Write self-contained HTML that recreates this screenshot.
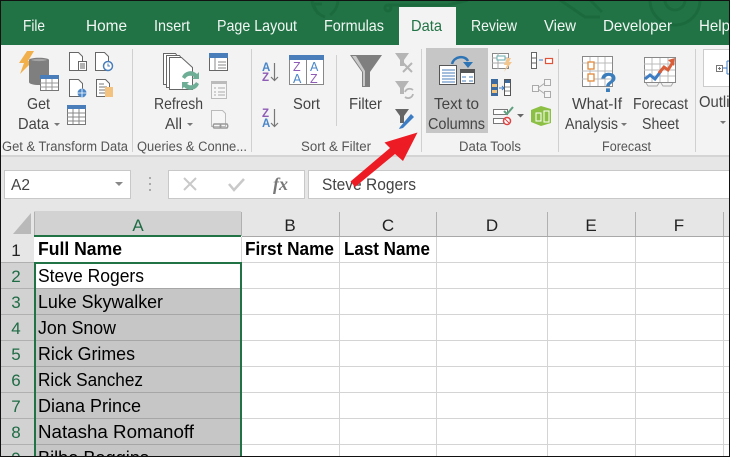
<!DOCTYPE html>
<html><head><meta charset="utf-8"><style>
html,body{margin:0;padding:0;background:#fff}
svg{display:block}
text{font-family:"Liberation Sans",sans-serif;font-size:16px;fill:#444}
.t{fill:#f2f7f4;font-size:16px}
.g{font-size:13.500px;fill:#555}
.c{font-size:18.500px;fill:#000}
.b{font-size:18px;font-weight:bold;fill:#000}
.h{font-size:17px;fill:#222}
.n{font-size:17px;fill:#1f6b45}
</style></head><body>
<svg width="730" height="457" viewBox="0 0 730 457" xmlns="http://www.w3.org/2000/svg" shape-rendering="geometricPrecision">
<rect width="730" height="457" fill="#fff"/>
<!-- title / tabs -->
<rect width="730" height="45" fill="#217346"/>
<g fill="none" stroke="#1b6a3e" stroke-width="3">
<path d="M312 0a19 19 0 0 0 13 17M338 0a19 19 0 0 1-8 15M318 14l-5-10h9M388 5h60M388 5a3 3 0 1 1-.1 0M448 5l20-5"/>
<path d="M560 0l25 17h15M590 0l12 12M700 0a25 25 0 0 1-50 0M665 0a10 10 0 0 0 20 0"/>
</g>
<rect x="399" y="7" width="57" height="38" fill="#f3f3f3"/>
<text class="t" x="23" y="31" textLength="22" lengthAdjust="spacingAndGlyphs">File</text>
<text class="t" x="86" y="31" textLength="41" lengthAdjust="spacingAndGlyphs">Home</text>
<text class="t" x="154" y="31" textLength="36" lengthAdjust="spacingAndGlyphs">Insert</text>
<text class="t" x="217" y="31" textLength="80" lengthAdjust="spacingAndGlyphs">Page Layout</text>
<text class="t" x="324" y="31" textLength="60" lengthAdjust="spacingAndGlyphs">Formulas</text>
<text class="t" x="411" y="31" textLength="31" lengthAdjust="spacingAndGlyphs" style="fill:#217346">Data</text>
<text class="t" x="471" y="31" textLength="46" lengthAdjust="spacingAndGlyphs">Review</text>
<text class="t" x="544" y="31" textLength="32" lengthAdjust="spacingAndGlyphs">View</text>
<text class="t" x="603" y="31" textLength="69" lengthAdjust="spacingAndGlyphs">Developer</text>
<text class="t" x="699" y="31" textLength="31" lengthAdjust="spacingAndGlyphs">Help</text>
<!-- ribbon -->
<rect y="45" width="730" height="110" fill="#f3f3f3"/>
<rect y="155" width="730" height="2" fill="#d4d4d4"/>
<g fill="#d0d0d0">
<rect x="132" y="49" width="1" height="103"/><rect x="251" y="49" width="1" height="103"/>
<rect x="421" y="49" width="1" height="103"/><rect x="558" y="49" width="1" height="103"/>
<rect x="695" y="49" width="1" height="103"/><rect x="336" y="55" width="1" height="71"/>
</g>
<rect x="426" y="48" width="62" height="85" fill="#c6c6c6"/>
<!-- ribbon labels -->
<text x="27" y="109" textLength="23" lengthAdjust="spacingAndGlyphs">Get</text>
<text x="18" y="129" textLength="31" lengthAdjust="spacingAndGlyphs">Data</text>
<text x="154" y="109" textLength="49" lengthAdjust="spacingAndGlyphs">Refresh</text>
<text x="165" y="129" textLength="17" lengthAdjust="spacingAndGlyphs">All</text>
<text x="293" y="109" textLength="27" lengthAdjust="spacingAndGlyphs">Sort</text>
<text x="349" y="109" textLength="33" lengthAdjust="spacingAndGlyphs">Filter</text>
<text x="434" y="109" textLength="45" lengthAdjust="spacingAndGlyphs">Text to</text>
<text x="428" y="129" textLength="57" lengthAdjust="spacingAndGlyphs">Columns</text>
<text x="572" y="109" textLength="50" lengthAdjust="spacingAndGlyphs">What-If</text>
<text x="565" y="129" textLength="53" lengthAdjust="spacingAndGlyphs">Analysis</text>
<text x="633" y="109" textLength="55" lengthAdjust="spacingAndGlyphs">Forecast</text>
<text x="642" y="129" textLength="37" lengthAdjust="spacingAndGlyphs">Sheet</text>
<text x="699" y="107" textLength="47" lengthAdjust="spacingAndGlyphs">Outline</text>
<text class="g" x="2" y="151" textLength="126" lengthAdjust="spacingAndGlyphs">Get &amp; Transform Data</text>
<text class="g" x="137" y="151" textLength="110" lengthAdjust="spacingAndGlyphs">Queries &amp; Conne...</text>
<text class="g" x="301" y="151" textLength="70" lengthAdjust="spacingAndGlyphs">Sort &amp; Filter</text>
<text class="g" x="459" y="151" textLength="62" lengthAdjust="spacingAndGlyphs">Data Tools</text>
<text class="g" x="602" y="151" textLength="49" lengthAdjust="spacingAndGlyphs">Forecast</text>
<g fill="#777"><path d="M54 123h6l-3 3zM187 123h6l-3 3zM621 123h6l-3 3zM720 121h6l-3 3z"/><path d="M517 114h7l-3.500 3.500z" fill="#666"/></g>

<!-- Get Data icon -->
<path d="M27 51h7l-6 10h5L20 74l4-11h-5z" fill="#f2b04c"/>
<path d="M29 60c0-3 20-3 20 0v22c0 4-20 4-20 0z" fill="#7f7f7f"/>
<path d="M31 60c3-1.500 13-1.500 16 0c-3 1.500-13 1.500-16 0z" fill="#a5a5a5"/>
<rect x="40.500" y="75.500" width="18" height="15" fill="#fff" stroke="#777"/>
<rect x="40" y="75" width="19" height="4" fill="#4a7ebb"/>
<path d="M40 83h18M40 87h18M46 79v11M52 79v11" stroke="#999" fill="none"/>
<!-- small docs -->
<g fill="#fff" stroke="#666" stroke-width="1">
<path d="M69.500 52.500h9l4 4v14h-13zM95.500 52.500h9l4 4v14h-13zM69.500 79.500h9l4 4v13h-13zM96.500 79.500h9l4 4v13h-13z"/>
</g>
<rect x="78.500" y="61.500" width="8" height="9" fill="#fff" stroke="#666"/><path d="M80 64h5M80 66h5M80 68h5" stroke="#666"/>
<circle cx="108" cy="66" r="4.500" fill="#fff" stroke="#4a7ebb" stroke-width="1.500"/><path d="M108 63.500V66h2" stroke="#4a7ebb" fill="none"/>
<circle cx="82" cy="93" r="4.500" fill="#4a86c8"/><path d="M77.500 93h9M82 88.500v9" stroke="#fff" stroke-width=".8"/>
<path d="M99 84h5M99 87h8M99 90h6M99 93h6" stroke="#777"/>
<rect x="105" y="87" width="8" height="10" fill="#f4c27f"/>
<rect x="67.500" y="105.500" width="18" height="19" fill="#fff" stroke="#777"/><rect x="67" y="105" width="19" height="4" fill="#4a7ebb"/>
<path d="M67 113h18M67 117h18M67 121h18M73 109v15M79 109v15" stroke="#888" fill="none"/>
<!-- Refresh icon -->
<g fill="#fff" stroke="#666"><path d="M163.500 53.500h12l3 4v27h-15z"/><path d="M166.500 55.500h13l3 4v28h-16z"/><path d="M169.500 57.500h12l11 10v22h-23z"/></g>
<path d="M182 77a9 9 0 0 1 15-3l2-2v7h-7l2-2a6 6 0 0 0-9 2zM199 84a9 9 0 0 1-15 3l-2 2v-7h7l-2 2a6 6 0 0 0 9-2z" fill="#6fae96"/>
<rect x="209.500" y="53.500" width="18" height="17" fill="#fff" stroke="#666"/><rect x="209" y="53" width="19" height="5" fill="#4a7ebb"/>
<path d="M215 58v12M218 62h8M218 65h8M218 68h8" stroke="#888" fill="none"/>
<rect x="211.500" y="81.500" width="15" height="17" fill="#f6f6f6" stroke="#bbb"/><rect x="211" y="81" width="16" height="3" fill="#bbb"/><path d="M214 88h2M218 88h7M214 92h2M218 92h7M214 95h2M218 95h7" stroke="#aaa"/>
<path d="M211.500 110.500h11l3 3v13h-14z" fill="#f6f6f6" stroke="#bbb"/><path d="M214 124h6a3 3 0 0 1 0 4h-6a3 3 0 0 1 0-4zM221 124h6a3 3 0 0 1 0 4h-6a3 3 0 0 1 0-4z" fill="none" stroke="#999" stroke-width="1.500"/>
<!-- sort icons -->
<rect x="289.500" y="55.500" width="34" height="29" fill="#fff" stroke="#888"/><rect x="289" y="55" width="35" height="5" fill="#4a7ebb"/><path d="M306.500 60v25" stroke="#888"/>
<text x="262" y="71" style="font-size:11.500px;font-weight:bold;fill:#4a86c8">A</text><text x="262" y="81" style="font-size:11.500px;font-weight:bold;fill:#8e5bb5">Z</text>
<text x="262" y="117" style="font-size:11.500px;font-weight:bold;fill:#8e5bb5">Z</text><text x="262" y="127" style="font-size:11.500px;font-weight:bold;fill:#4a86c8">A</text>
<text x="293" y="71" style="font-size:12.500px;fill:#8e5bb5">Z</text><text x="293" y="83" style="font-size:12.500px;fill:#4a86c8">A</text>
<text x="310" y="71" style="font-size:12.500px;fill:#4a86c8">A</text><text x="310" y="83" style="font-size:12.500px;fill:#8e5bb5">Z</text>
<path d="M274.500 63v17M271 77l3.500 3.500L278 77M274.500 109v17M271 123l3.500 3.500L278 123" fill="none" stroke="#777" stroke-width="1.200"/>
<!-- filter -->
<path d="M350 55h32l-12 17v15h-8V72z" fill="#7f7f7f"/><path d="M356 57h20l-9 15v14h-2V72z" fill="#7f7f7f"/><path d="M352 56l11 16v14h2V71L356 56z" fill="#c9c9c9"/>
<path d="M395 53h14l-5 7v6h-4v-6z" fill="#b5b5b5"/><path d="M403 63l9 9M412 63l-9 9" stroke="#b5b5b5" stroke-width="2"/>
<path d="M395 81h14l-5 7v6h-4v-6z" fill="#b5b5b5"/><path d="M405 92a5 5 0 0 1 8-2M413 94a5 5 0 0 1-8 3" fill="none" stroke="#b5b5b5" stroke-width="1.800"/>
<path d="M395 109h14l-5 7v7h-4v-7z" fill="#666"/><path d="M400 127l11-13 3 3-11 11-4 1z" fill="#3b7cc4"/>
<!-- text to columns -->
<rect x="439.500" y="65.500" width="17" height="19" fill="#fff" stroke="#555"/><path d="M442 70h13M442 73h13M442 76h13M442 79h13M442 82h13" stroke="#4a7ebb"/>
<rect x="460.500" y="69.500" width="14" height="14" fill="#fff" stroke="#555"/><rect x="460" y="69" width="15" height="4" fill="#555"/><path d="M462 77h4M469 77h4M462 81h4M469 81h4" stroke="#4a7ebb"/>
<path d="M452 64c2-8 13-9 16-3" fill="none" stroke="#2e75b6" stroke-width="2.500"/><path d="M463 62h10l-5 6z" fill="#2e75b6"/>
<!-- data tools small -->
<rect x="492.500" y="53.500" width="16" height="15" fill="#fff" stroke="#888"/><path d="M492 58h16M492 63h16M498 53v16" stroke="#aaa"/><rect x="497" y="56" width="8" height="4" fill="#fff" stroke="#6aa"/><path d="M507 58l-3 7h3l-3 7 8-10h-3l2-4z" fill="#f2c68c"/>
<rect x="491.500" y="79.500" width="6" height="16" fill="#3c6a9e" stroke="#3c6a9e"/><rect x="492" y="84" width="5" height="3" fill="#f0c27a"/><rect x="492" y="90" width="5" height="3" fill="#f0c27a"/>
<rect x="504.500" y="79.500" width="6" height="16" fill="#fff" stroke="#555"/><rect x="505" y="80" width="5" height="3" fill="#3c6a9e"/><path d="M505 87h5M505 91h5" stroke="#888"/>
<path d="M499 88h5M502 86l2 2-2 2" stroke="#3b7cc4" fill="none"/>
<rect x="493.500" y="109.500" width="14" height="5" fill="#fff" stroke="#777"/><rect x="493.500" y="118.500" width="14" height="5" fill="#fff" stroke="#777"/>
<path d="M504 111l3 3 6-7" stroke="#5fa07f" stroke-width="2" fill="none"/><circle cx="507" cy="121" r="3.500" fill="#fff" stroke="#d44" stroke-width="1.500"/><path d="M505 119l4 4" stroke="#d44"/>
<rect x="531.500" y="52.500" width="5" height="16" fill="#fff" stroke="#666"/><path d="M531 58h5M531 63h5" stroke="#666"/><path d="M539 60h4" stroke="#3b7cc4"/><rect x="545.500" y="58.500" width="7" height="5" fill="#fff" stroke="#e0533a" stroke-width="1.200"/>
<g fill="#f6f6f6" stroke="#aaa"><rect x="532.500" y="85.500" width="6" height="6"/><rect x="544.500" y="79.500" width="6" height="6"/><rect x="544.500" y="91.500" width="6" height="6"/></g><path d="M538 88l7-5M538 89l7 5" stroke="#aaa"/>
<path d="M531 110l10-4 10 3v14l-10 3-10-4z" fill="#8cc044"/><path d="M536 113h5v8h-5zM544 111h5v11h-5z" fill="none" stroke="#fff"/>
<!-- what-if -->
<rect x="582.500" y="56.500" width="30" height="30" fill="#fff" stroke="#888"/>
<path d="M590 57v29M598 57v29M605 57v29M582 63h30M582 71h30M582 79h30" stroke="#bbb"/>
<rect x="588" y="62" width="6" height="7" fill="#fff" stroke="#e08a3c" stroke-width="1.300"/><rect x="588" y="74" width="6" height="7" fill="#fff" stroke="#e08a3c" stroke-width="1.300"/>
<text x="600" y="92" style="font-size:28px;font-weight:bold;fill:#3c7dbb">?</text>
<!-- forecast -->
<rect x="644.500" y="57.500" width="31" height="25" fill="#fff" stroke="#888"/>
<path d="M652 58v24M660 58v24M668 58v24M644 64h31M644 70h31M644 76h31" stroke="#bbb"/>
<path d="M645 79l5-4 5 4 6-8" fill="none" stroke="#3b7cc4" stroke-width="3"/>
<path d="M659 73l5-6 4 3 5-8" fill="none" stroke="#d95f3b" stroke-width="3"/><path d="M668 60l7-2-1 8z" fill="#d95f3b"/>
<path d="M646 83l2 3h9l2-3M661 83l2 3h8l2-3" fill="none" stroke="#aaa"/>
<!-- outline -->
<rect x="703.500" y="49.500" width="28" height="37" fill="#fff" stroke="#ccc"/>
<rect x="716.500" y="65.500" width="6" height="6" fill="#fff" stroke="#777"/><path d="M718 68.500h3M719.500 67v3" stroke="#777"/>
<path d="M723 68h4M727 61h3M727 74h3M727 61v13" stroke="#3b7cc4" fill="none"/>

<!-- formula bar -->
<rect y="157" width="730" height="55" fill="#e6e6e6"/>
<rect x="4.500" y="170.500" width="126" height="28" fill="#fff" stroke="#c8c8c8"/>
<text x="11" y="190" textLength="19" lengthAdjust="spacingAndGlyphs" style="font-size:16px">A2</text>
<path d="M115 182h8l-4 4z" fill="#888"/>
<path d="M149 177h2v2h-2zM149 183h2v2h-2zM149 189h2v2h-2z" fill="#aaa"/>
<rect x="168.500" y="170.500" width="136" height="28" fill="#fff" stroke="#c8c8c8"/>
<rect x="308.500" y="170.500" width="424" height="28" fill="#fff" stroke="#c8c8c8"/>
<path d="M184 178l12 12M196 178l-12 12" stroke="#c9c9c9" stroke-width="2"/>
<path d="M229 184l5 6 10-11" fill="none" stroke="#c9c9c9" stroke-width="2.500"/>
<text x="273" y="190" style="font-family:'Liberation Serif',serif;font-size:18px;font-style:italic;font-weight:bold;fill:#777">fx</text>
<text x="322" y="190" textLength="94" lengthAdjust="spacingAndGlyphs" style="font-size:16.500px">Steve Rogers</text>

<!-- headers -->
<rect x="1" y="211" width="729" height="25" fill="#e6e6e6"/>
<rect x="1" y="236" width="33" height="221" fill="#e6e6e6"/>
<rect x="1" y="262" width="33" height="195" fill="#d2d2d2"/>
<rect x="34" y="211" width="207" height="25" fill="#d2d2d2"/>
<path d="M31 213v21H13z" fill="#b9b9b9"/>
<g fill="#b0b0b0">
<rect x="339" y="212" width="1" height="24"/><rect x="436" y="212" width="1" height="24"/><rect x="547" y="212" width="1" height="24"/><rect x="635" y="212" width="1" height="24"/><rect x="723" y="212" width="1" height="24"/><rect x="241" y="212" width="1" height="24"/>
<rect x="34" y="212" width="1" height="24"/>
<rect x="1" y="262" width="33" height="1"/><rect x="1" y="288" width="33" height="1"/><rect x="1" y="314" width="33" height="1"/><rect x="1" y="340" width="33" height="1"/><rect x="1" y="366" width="33" height="1"/><rect x="1" y="392" width="33" height="1"/><rect x="1" y="418" width="33" height="1"/><rect x="1" y="444" width="33" height="1"/>
<rect x="242" y="236" width="488" height="1" fill="#a8a8a8"/>
</g>
<!-- grid -->
<g fill="#d4d4d4">
<rect x="339" y="237" width="1" height="220"/><rect x="436" y="237" width="1" height="220"/><rect x="547" y="237" width="1" height="220"/><rect x="635" y="237" width="1" height="220"/><rect x="723" y="237" width="1" height="220"/><rect x="241" y="237" width="1" height="25"/>
<rect x="34" y="262" width="696" height="1"/><rect x="34" y="288" width="696" height="1"/><rect x="34" y="314" width="696" height="1"/><rect x="34" y="340" width="696" height="1"/><rect x="34" y="366" width="696" height="1"/><rect x="34" y="392" width="696" height="1"/><rect x="34" y="418" width="696" height="1"/><rect x="34" y="444" width="696" height="1"/>
</g>
<rect x="36" y="288" width="204" height="169" fill="#c6c6c6"/>
<g fill="#a6a6a6"><rect x="36" y="288" width="204" height="1"/><rect x="36" y="314" width="204" height="1"/><rect x="36" y="340" width="204" height="1"/><rect x="36" y="366" width="204" height="1"/><rect x="36" y="392" width="204" height="1"/><rect x="36" y="418" width="204" height="1"/><rect x="36" y="444" width="204" height="1"/></g>
<rect x="34" y="235" width="207" height="2" fill="#217346"/>
<path d="M35 457V263h206v194" fill="none" stroke="#217346" stroke-width="2"/>
<!-- letters -->
<text class="h" x="138" y="231" text-anchor="middle" style="fill:#1f6b45">A</text>
<text class="h" x="290" y="231" text-anchor="middle">B</text>
<text class="h" x="388" y="231" text-anchor="middle">C</text>
<text class="h" x="492" y="231" text-anchor="middle">D</text>
<text class="h" x="591" y="231" text-anchor="middle">E</text>
<text class="h" x="679" y="231" text-anchor="middle">F</text>
<text class="h" x="16" y="256" text-anchor="middle">1</text>
<text class="n" x="16" y="282" text-anchor="middle">2</text>
<text class="n" x="16" y="308" text-anchor="middle">3</text>
<text class="n" x="16" y="334" text-anchor="middle">4</text>
<text class="n" x="16" y="360" text-anchor="middle">5</text>
<text class="n" x="16" y="386" text-anchor="middle">6</text>
<text class="n" x="16" y="412" text-anchor="middle">7</text>
<text class="n" x="16" y="438" text-anchor="middle">8</text>
<text class="n" x="16" y="464" text-anchor="middle">9</text>
<!-- cells -->
<text class="b" x="38" y="255" textLength="84" lengthAdjust="spacingAndGlyphs">Full Name</text>
<text class="b" x="245" y="255" textLength="89" lengthAdjust="spacingAndGlyphs">First Name</text>
<text class="b" x="344" y="255" textLength="86" lengthAdjust="spacingAndGlyphs">Last Name</text>
<text class="c" x="38" y="282" textLength="106" lengthAdjust="spacingAndGlyphs">Steve Rogers</text>
<text class="c" x="38" y="308" textLength="125" lengthAdjust="spacingAndGlyphs">Luke Skywalker</text>
<text class="c" x="38" y="334" textLength="78" lengthAdjust="spacingAndGlyphs">Jon Snow</text>
<text class="c" x="38" y="360" textLength="97" lengthAdjust="spacingAndGlyphs">Rick Grimes</text>
<text class="c" x="38" y="386" textLength="105" lengthAdjust="spacingAndGlyphs">Rick Sanchez</text>
<text class="c" x="38" y="412" textLength="103" lengthAdjust="spacingAndGlyphs">Diana Prince</text>
<text class="c" x="38" y="438" textLength="156" lengthAdjust="spacingAndGlyphs">Natasha Romanoff</text>
<text class="c" x="38" y="464" textLength="111" lengthAdjust="spacingAndGlyphs">Bilbo Baggins</text>
<!-- red arrow -->
<path d="M417.500 132.500L403 161L395 154L355 187L350.500 181.500L390 148L384.500 142.500Z" fill="#ed1c24"/>
<!-- frame -->
<path d="M.5 457V.5H729.500V457M0 456.500H730" fill="none" stroke="#111" stroke-width="1"/>
</svg>
</body></html>
